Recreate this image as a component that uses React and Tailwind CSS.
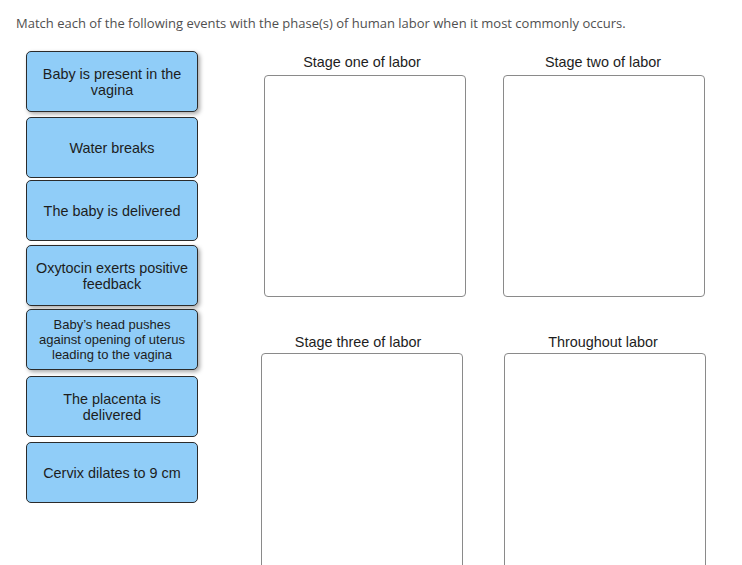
import React from "react";

const events = [
  { text: "Baby is present in the vagina", mt: "mt-0", shadow: true },
  { text: "Water breaks", mt: "mt-[5px]", shadow: false },
  { text: "The baby is delivered", mt: "mt-[2px]", shadow: false },
  { text: "Oxytocin exerts positive feedback", mt: "mt-[4px]", shadow: true },
  { text: "Baby\u2019s head pushes against opening of uterus leading to the vagina", mt: "mt-[3px]", shadow: true, small: true },
  { text: "The placenta is delivered", mt: "mt-[6px]", shadow: false },
  { text: "Cervix dilates to 9 cm", mt: "mt-[5px]", shadow: false },
];

function EventCard({ text, mt, shadow, small }) {
  return (
    <div
      className={`${mt} h-[61px] w-[172px] rounded-[5px] border border-[#2b2b2b] bg-[#90cdf8] flex items-center justify-center text-center px-[6px] text-[#1d1d1d] ${
        small ? "text-[13px] leading-[15px]" : "text-[14.4px] leading-[16px]"
      } ${shadow ? "shadow-[2px_2px_4px_rgba(0,0,0,0.35)]" : ""}`}
    >
      <span>{text}</span>
    </div>
  );
}

function DropZone({ label, gap, height, shift }) {
  return (
    <div className="flex flex-col items-center w-[202px]">
      <div className={`${shift} text-[14.4px] leading-[16px] text-[#1d1d1d] whitespace-nowrap`}>{label}</div>
      <div className={`${gap} ${height} w-[202px] rounded-[4px] border border-[#8a8a8a] bg-white`} />
    </div>
  );
}

export default function App() {
  return (
    <div className="w-[742px] h-[565px] overflow-hidden bg-white font-['Liberation_Sans',Arial,sans-serif]">
      <p className="pl-[16px] pt-[14px] text-[13px] leading-[18px] text-[#505050] font-['Open_Sans','Lato',sans-serif]">
        Match each of the following events with the phase(s) of human labor when it most commonly occurs.
      </p>
      <div className="flex mt-[19px]">
        <div className="ml-[26px] flex flex-col">
          {events.map((e) => (
            <EventCard key={e.text} {...e} />
          ))}
        </div>
        <div className="flex flex-col pt-[3px]">
          <div className="flex ml-[66px] gap-[37px]">
            <DropZone label="Stage one of labor" gap="mt-[5px]" height="h-[222px]" shift="mr-[6px]" />
            <DropZone label="Stage two of labor" gap="mt-[5px]" height="h-[222px]" shift="mr-[2px]" />
          </div>
          <div className="flex ml-[63px] gap-[41px] mt-[37px]">
            <DropZone label="Stage three of labor" gap="mt-[3px]" height="h-[230px]" shift="mr-[8px]" />
            <DropZone label="Throughout labor" gap="mt-[3px]" height="h-[230px]" shift="mr-[4px]" />
          </div>
        </div>
      </div>
    </div>
  );
}
